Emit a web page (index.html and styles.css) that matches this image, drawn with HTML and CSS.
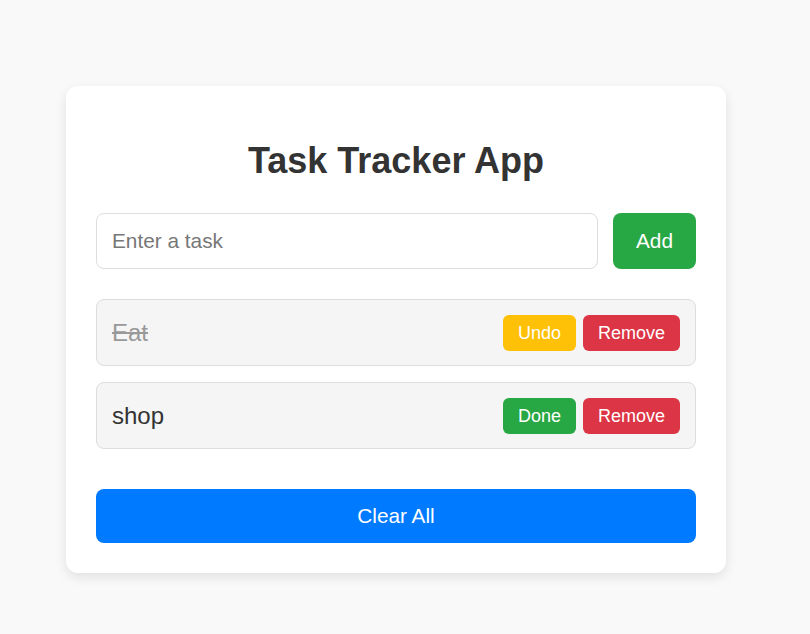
FILE: index.html
```html
<!DOCTYPE html>
<html>
  <head>
    <title>Task Tracker App</title>

    <link rel="stylesheet" href="styles.css">
  </head>

  <body>
    <div class="app">
      <h1>Task Tracker App</h1>

      <div class="taskForm">
        <input type="text" class="taskInput" placeholder="Enter a task">
        <button class="btn addBtn">Add</button>
      </div>

      <ul class="taskList">
        <li class="task done">
          <span class="taskText">Eat</span>
          <div class="taskActions">
            <button class="btn small undoBtn">Undo</button>
            <button class="btn small removeBtn">Remove</button>
          </div>
        </li>
        <li class="task">
          <span class="taskText">shop</span>
          <div class="taskActions">
            <button class="btn small doneBtn">Done</button>
            <button class="btn small removeBtn">Remove</button>
          </div>
        </li>
      </ul>

      <button class="btn clearBtn">Clear All</button>
    </div>
  </body>
</html>
```

FILE: styles.css
```css
body {
  margin: 0;
  padding: 86px 18px 40px 0;
  background-color: #f9f9f9;
  font-family: "Liberation Sans", Arial, sans-serif;
  color: #333;
}

.app {
  width: 600px;
  margin: 0 auto;
  padding: 30px;
  background-color: #fff;
  border-radius: 12px;
  box-shadow: 0 4px 12px rgba(0, 0, 0, 0.1);
}

h1 {
  font-size: 36px;
  text-align: center;
  margin: 24px 0 31px;
}

.taskForm {
  display: flex;
  gap: 15px;
}

.taskInput {
  flex: 1;
  min-width: 0;
  font-family: inherit;
  font-size: 20.8px;
  line-height: 24px;
  padding: 15px;
  border: 1px solid #ddd;
  border-radius: 8px;
  color: #333;
  outline: none;
}
.taskInput::placeholder {
  color: #777;
}

.btn {
  font-family: inherit;
  border: none;
  color: #fff;
  cursor: pointer;
}

.addBtn {
  font-size: 20.8px;
  line-height: 24px;
  padding: 16px 23px;
  border-radius: 8px;
  background-color: #28a745;
}

.taskList {
  list-style: none;
  padding: 0;
  margin: 30px 0 40px;
}

.task {
  display: flex;
  align-items: center;
  justify-content: space-between;
  padding: 14.5px 15px;
  margin-bottom: 16px;
  background-color: #f5f5f5;
  border: 1px solid #ddd;
  border-radius: 8px;
}
.task:last-child {
  margin-bottom: 0;
}

.taskText {
  font-size: 24px;
}
.task.done .taskText {
  color: #999;
  text-decoration: line-through;
}

.taskActions {
  display: flex;
  gap: 7px;
}

.btn.small {
  font-size: 18px;
  line-height: 20px;
  padding: 8px 15px;
  border-radius: 6px;
}

.undoBtn {
  background-color: #ffc107;
}
.doneBtn {
  background-color: #28a745;
}
.removeBtn {
  background-color: #dc3545;
}

.clearBtn {
  display: block;
  width: 100%;
  font-size: 20.8px;
  line-height: 24px;
  padding: 15px;
  border-radius: 8px;
  background-color: #007bff;
}
```
